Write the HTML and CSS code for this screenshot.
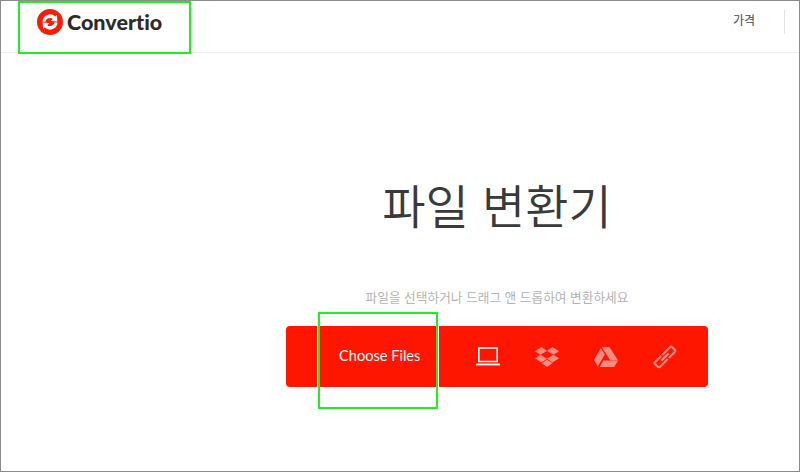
FILE: index.html
```html
<!DOCTYPE html>
<html lang="ko">
<head>
<meta charset="utf-8">
<title>Convertio</title>
<link rel="stylesheet" href="styles.css">
</head>
<body>
<div class="frame">
  <header class="header">
    <a class="logo">
      <svg class="logo-icon" viewBox="0 0 26 26" width="26" height="26">
        <circle cx="13" cy="13" r="13" fill="#f81d04"/>
        <g transform="translate(1.300 1.300) scale(.9)" fill="#fff">
          <path d="M4.600 12.400A8.500 8.500 0 0 1 18.800 6.800L20.600 5l.6 7.400-7.400-.6 2.300-2.300A5.300 5.300 0 0 0 7.800 12.800Z"/>
          <path d="M21.400 13.600A8.500 8.500 0 0 1 7.200 19.200L5.400 21l-.6-7.400 7.400.6-2.300 2.300a5.300 5.300 0 0 0 8.300-3.300Z"/>
        </g>
      </svg>
      <span class="logo-text">Convertio</span>
    </a>
    <nav class="nav"><span class="nav-link">가격</span></nav>
  </header>
  <main class="main">
    <h1 class="title">파일 변환기</h1>
    <p class="subtitle">파일을 선택하거나 드래그 앤 드롭하여 변환하세요</p>
    <div class="picker">
      <span class="choose">Choose Files</span>
      <div class="sources">
        <svg class="src" width="24" height="20" viewBox="0 0 24 20"><path d="M2.800 1h18.400v13.500H2.800z" fill="none" stroke="#fff" stroke-width="1.600"/><path d="M0 17.500h24" stroke="#fff" stroke-width="1.800"/></svg>
        <svg class="src dim" width="24" height="20" viewBox="0 0 24 20" fill="#fff"><path d="M6.500 0 0 4.200l5.500 3.500L12 4Z"/><path d="M17.500 0 24 4.200l-5.500 3.500L12 4Z"/><path d="M0 11.200l6.500 4.200 5.500-3.700-6.500-4Z"/><path d="M24 11.200l-6.500 4.200-5.500-3.700 6.500-4Z"/><path d="M12 12.700l-5.500 3.500 5.500 3.800 5.500-3.800Z"/></svg>
        <svg class="src dim" width="24" height="20" viewBox="0 0 24 20" fill="#fff"><path d="M7.800 0h7.600l8.600 13.200h-7.800Z"/><path d="M6.800 1 0 13l3.800 6.500L10.800 7.400Z"/><path d="M9.400 13.400h14.600l-3.800 6.600H5.600Z"/></svg>
        <svg class="src dim" width="24" height="24" viewBox="0 0 24 24" fill="none" stroke="#fff" stroke-width="2.200"><g transform="rotate(-45 12 12)"><path d="M10 8.600H1.500A1.500 1.500 0 0 0 0 10.100v3.800a1.500 1.500 0 0 0 1.500 1.500H12.500"/><path d="M11.500 8.600H22.500A1.500 1.500 0 0 1 24 10.100v3.800a1.500 1.500 0 0 1-1.500 1.500H14"/><path d="M7 12H17"/></g></svg>
      </div>
    </div>
  </main>
  <div class="mark mark-logo"></div>
  <div class="mark mark-button"></div>
</div>
</body>
</html>
```
FILE: styles.css
```css
* { box-sizing: border-box; }
html, body { margin: 0; padding: 0; }
body { background: #fff; font-family: "Noto Sans CJK KR", "Noto Sans", sans-serif; }
.frame { position: relative; width: 800px; height: 472px; border: 1px solid #8c8c8c; overflow: hidden; }
.header { height: 52px; display: flex; align-items: center; justify-content: space-between; border-bottom: 1px solid #ededed; padding: 0 14px 9px 36px; }
.logo { display: flex; align-items: center; gap: 4px; }
.logo-icon { display: block; }
.logo-text { font-family: "Lato", sans-serif; font-weight: 900; font-size: 21.500px; line-height: 26px; color: #2b2b2b; font-variant-ligatures: none; }
.nav { display: flex; align-items: center; height: 24px; border-right: 1px solid #e3e3e3; padding-right: 29px; }
.nav-link { font-size: 12px; line-height: 16px; margin-top: -4px; color: #3d4a56; }
.main { display: flex; flex-direction: column; align-items: flex-start; padding-left: 285px; }
.title { margin: 116px 0 0; width: 422px; text-align: center; font-size: 47px; line-height: 70px; font-weight: 350; color: #3a3a3a; }
.subtitle { margin: 49px 0 0; width: 422px; text-align: center; font-size: 12.700px; line-height: 18px; color: #b4b4b4; }
.picker { margin-top: 20px; width: 422px; height: 61px; background: #fe1600; border-radius: 4px; display: flex; align-items: center; padding-left: 53px; }
.choose { font-family: "Lato", sans-serif; width: 137px; font-size: 14.600px; line-height: 18px; margin-top: -2px; color: #fff; white-space: nowrap; }
.sources { display: flex; align-items: center; gap: 35px; }
.src { display: block; }
.dim { opacity: .5; }
.mark { position: absolute; border: 2px solid #1ef01e; box-shadow: 0 0 0 1px #fff; }
.mark-logo { left: 17px; top: 0; width: 173px; height: 53px; }
.mark-button { left: 317px; top: 311px; width: 120px; height: 97px; }
```
